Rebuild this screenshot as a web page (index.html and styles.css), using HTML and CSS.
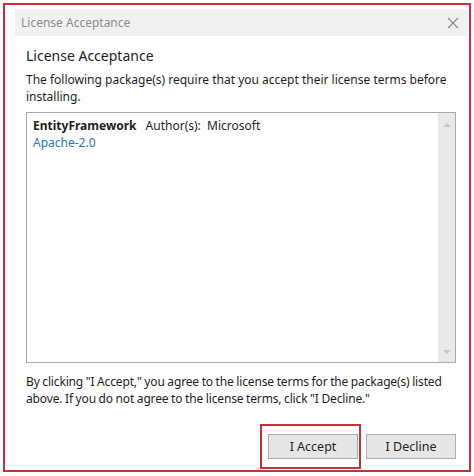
FILE: index.html
```html
<!DOCTYPE html>
<html>
  <head>
    <meta charset="UTF-8">
    <title>License Acceptance</title>
    <link rel="stylesheet" href="styles.css">
  </head>
  <body>
    <div class="frame">
      <div class="titlebar">
        <span class="title">License Acceptance</span>
        <svg class="close" width="12" height="12" viewBox="0 0 12 12">
          <path d="M1 1 L11 11 M11 1 L1 11" stroke="#8a8a8a" stroke-width="1.1" fill="none"/>
        </svg>
      </div>
      <div class="content">
        <h1>License Acceptance</h1>
        <p class="intro">The following package(s) require that you accept their license terms before installing.</p>

        <div class="list">
          <div class="items">
            <div class="pkg">
              <span class="pkg-name">EntityFramework</span>
              <span class="pkg-author">Author(s):&nbsp; Microsoft</span>
            </div>
            <a class="license" href="#">Apache-2.0</a>
          </div>
          <div class="scrollbar">
            <svg width="8" height="5" viewBox="0 0 8 5"><path d="M0 5 L4 1 L8 5 Z" fill="#c6c6c6"/></svg>
            <svg width="8" height="5" viewBox="0 0 8 5"><path d="M0 0 L4 4 L8 0 Z" fill="#c6c6c6"/></svg>
          </div>
        </div>

        <p class="terms">By clicking "I Accept," you agree to the license terms for the package(s) listed above. If you do not agree to the license terms, click "I Decline."</p>

        <div class="buttons">
          <div class="highlight">
            <button class="btn">I Accept</button>
          </div>
          <button class="btn">I Decline</button>
        </div>
      </div>
    </div>
  </body>
</html>
```

FILE: styles.css
```css
body {
  margin: 0;
  background-color: white;
  font-family: "Noto Sans", "Open Sans", sans-serif;
  color: #1e1e1e;
}
.frame {
  box-sizing: border-box;
  width: 468px;
  height: 469px;
  margin: 3px 0 0 3px;
  border: 2px solid #c8313c;
  padding: 4px 2px 0 10px;
  display: flex;
  flex-direction: column;
}
.titlebar {
  height: 27px;
  background-color: #f1f1f1;
  display: flex;
  align-items: center;
  justify-content: space-between;
  padding: 0 8px 0 6px;
}
.title {
  font-size: 12px;
  color: #8c8c8c;
}
.close {
  display: block;
}
.content {
  flex: 1;
  display: flex;
  flex-direction: column;
  padding: 0 11px 0 11px;
}
h1 {
  font-size: 14px;
  line-height: 20px;
  font-weight: normal;
  margin: 10px 0 5px 0;
  color: #222;
}
p {
  font-size: 12px;
  line-height: 17px;
  margin: 0;
}
.intro {
  margin-bottom: 7px;
}
.list {
  height: 251px;
  box-sizing: border-box;
  border: 1px solid #a9a9a9;
  display: flex;
}
.items {
  flex: 1;
  padding: 4px 6px;
  font-size: 12px;
  line-height: 17px;
}
.pkg-name {
  font-weight: bold;
  margin-right: 6px;
}
.license {
  color: #1f74b7;
  text-decoration: none;
}
.scrollbar {
  width: 17px;
  background-color: #e9e9e9;
  display: flex;
  flex-direction: column;
  justify-content: space-between;
  align-items: center;
  padding: 9px 0 7px 0;
}
.scrollbar svg {
  display: block;
}
.terms {
  margin-top: 10px;
  letter-spacing: -0.15px;
  word-spacing: -0.3px;
}
.buttons {
  margin-top: auto;
  display: flex;
  justify-content: flex-end;
  align-items: center;
  gap: 5px;
  padding-bottom: 1px;
}
.highlight {
  border: 2px solid #c8313c;
  padding: 8px 1px 8px 6px;
}
.btn {
  width: 90px;
  height: 25px;
  font-family: inherit;
  font-size: 12.5px;
  color: #1e1e1e;
  background-color: #e6e6e6;
  border: 1px solid #adadad;
  padding: 0;
}
```
